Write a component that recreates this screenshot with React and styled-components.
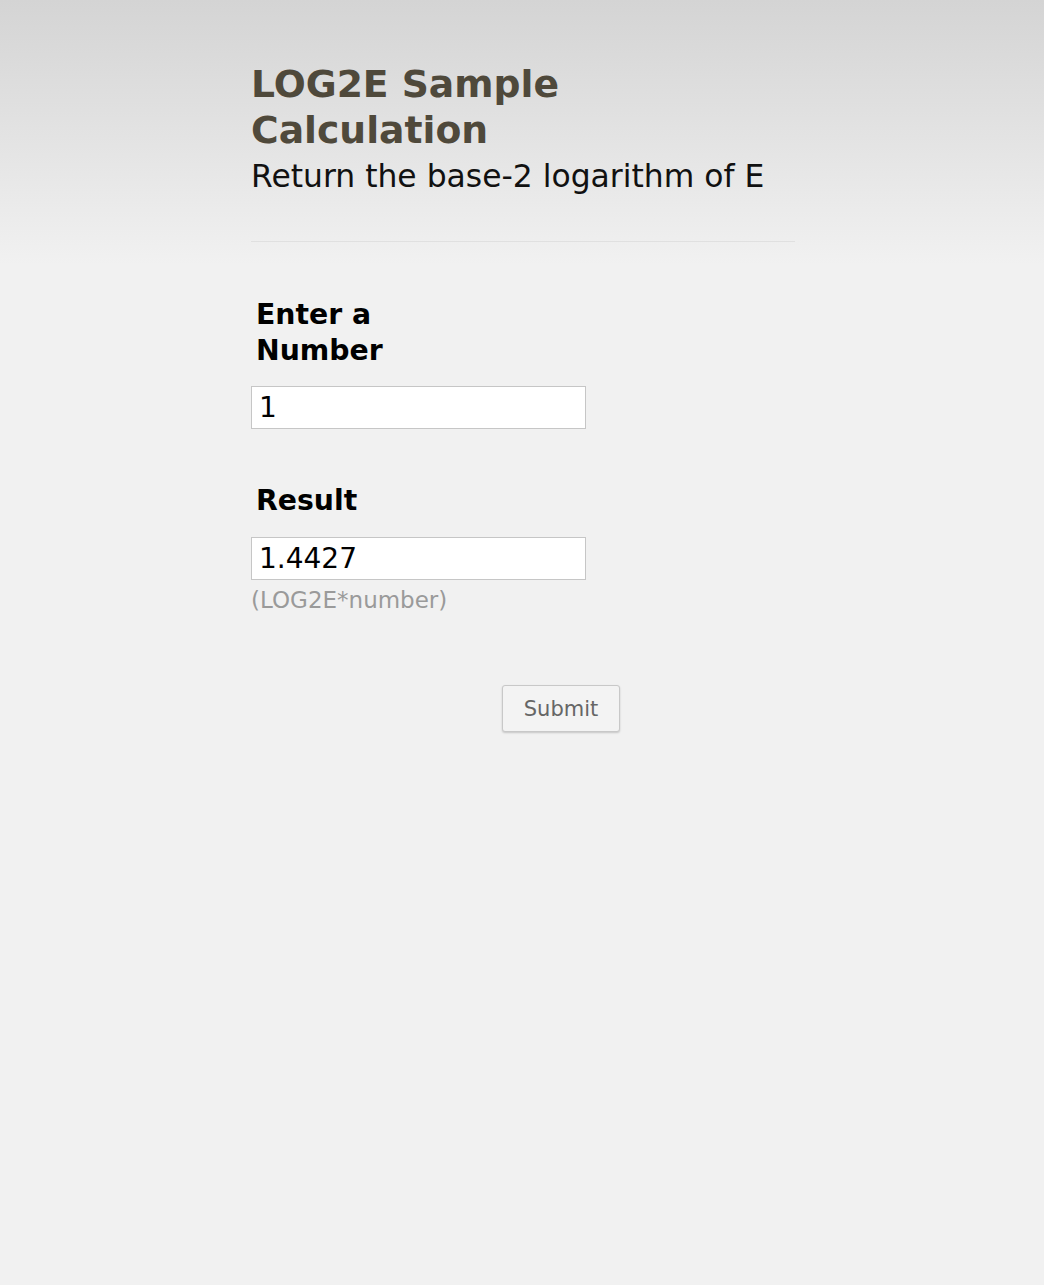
import React from "react";
import styled, { createGlobalStyle } from "styled-components";

const Global = createGlobalStyle`
  html, body { margin: 0; padding: 0; }
  body {
    font-family: "DejaVu Sans", Verdana, sans-serif;
    background: #f1f1f1 linear-gradient(to bottom, #d4d4d4 0px, #f1f1f1 265px) no-repeat;
    min-height: 1285px;
  }
`;

const Page = styled.div`
  width: 544px;
  margin-left: calc(50% - 271px);
  padding-top: 61px;
`;

const Header = styled.header`
  border-bottom: 1px solid #e0e0e0;
  padding-bottom: 43px;
`;

const Title = styled.h1`
  margin: 0;
  width: 330px;
  font-size: 37.7px;
  line-height: 46px;
  font-weight: bold;
  color: #4f493b;
`;

const Subtitle = styled.p`
  margin: 1px 0 0;
  font-size: 31.4px;
  line-height: 44px;
  color: #111;
`;

const Form = styled.form`
  padding-top: 55px;
  display: flex;
  flex-direction: column;
`;

const Field = styled.div`
  display: flex;
  flex-direction: column;
  margin-bottom: ${(p) => p.$gap || 0}px;
`;

const Label = styled.label`
  padding-left: 5px;
  width: 150px;
  font-size: 28.3px;
  line-height: 36px;
  font-weight: bold;
  color: #000;
  margin-bottom: ${(p) => p.$space || 17}px;
`;

const Input = styled.input`
  box-sizing: border-box;
  width: 335px;
  height: 43px;
  border: 1px solid #c6c6c6;
  background: #fff;
  padding: 0 7px;
  font-family: "DejaVu Sans", Verdana, sans-serif;
  font-size: 28px;
  color: #000;
  outline: none;
`;

const Hint = styled.div`
  font-size: 23px;
  line-height: 30px;
  color: #9a9a9a;
  margin-top: 5px;
`;

const Actions = styled.div`
  padding-left: 251px;
  padding-top: 70px;
`;

const Button = styled.button`
  box-sizing: border-box;
  width: 118px;
  height: 47px;
  border: 1px solid #c8c8c8;
  border-radius: 3px;
  background: #f3f3f3;
  box-shadow: 0 1px 2px rgba(0, 0, 0, 0.18);
  font-family: "DejaVu Sans", Verdana, sans-serif;
  font-size: 21px;
  color: #666;
  cursor: pointer;
`;

export default function App() {
  return (
    <>
      <Global />
      <Page>
        <Header>
          <Title>LOG2E Sample Calculation</Title>
          <Subtitle>Return the base-2 logarithm of E</Subtitle>
        </Header>
        <Form onSubmit={(e) => e.preventDefault()}>
          <Field $gap={54}>
            <Label htmlFor="num">Enter a Number</Label>
            <Input id="num" defaultValue="1" />
          </Field>
          <Field>
            <Label htmlFor="res" $space={18}>Result</Label>
            <Input id="res" defaultValue="1.4427" readOnly />
            <Hint>(LOG2E*number)</Hint>
          </Field>
          <Actions>
            <Button type="submit">Submit</Button>
          </Actions>
        </Form>
      </Page>
    </>
  );
}
